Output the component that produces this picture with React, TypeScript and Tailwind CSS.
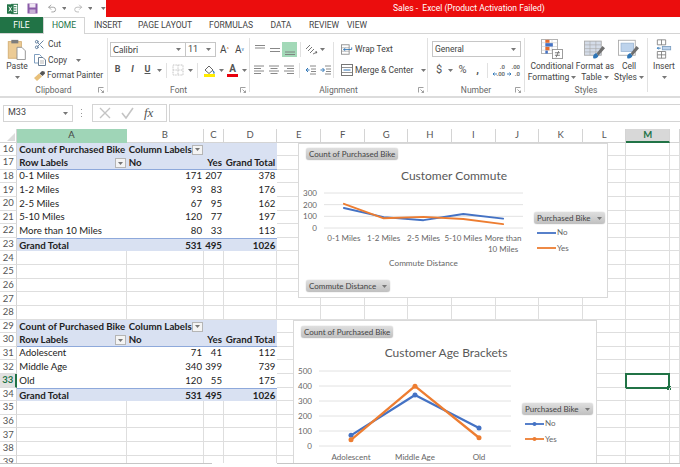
import React from 'react';
import { Scissors, Undo2, Redo2 } from 'lucide-react';

const ui = "font-['Roboto','Open_Sans',sans-serif]";
const calibri = "font-['Lato','Open_Sans',sans-serif]";

const Caret = ({ className = '' }: { className?: string }) => (
  <svg width="5" height="3" viewBox="0 0 5 3" className={className}>
    <polygon points="0,0 5,0 2.5,3" fill="#777" />
  </svg>
);

const Launcher = () => (
  <svg width="6" height="6" viewBox="0 0 6 6" className="absolute right-[3px] bottom-[3px]">
    <path d="M0.5 5.5V0.5H5.5M2.5 2.5L5.5 5.5M3.5 5.5H5.5V3.5" fill="none" stroke="#888" strokeWidth="0.8" />
  </svg>
);

const Lines = ({ kind }: { kind: 'top' | 'mid' | 'bot' | 'left' | 'center' | 'right' }) => {
  const rows: Record<string, [number, number, number][]> = {
    top: [[1, 11, 1.5], [1, 11, 4]],
    mid: [[1, 11, 4.5], [1, 11, 7.5]],
    bot: [[1, 11, 8], [1, 11, 10.5]],
    left: [[1, 11, 2], [1, 8, 4.5], [1, 11, 7], [1, 8, 9.5]],
    center: [[1, 11, 2], [2.5, 9.5, 4.5], [1, 11, 7], [2.5, 9.5, 9.5]],
    right: [[1, 11, 2], [4, 11, 4.5], [1, 11, 7], [4, 11, 9.5]],
  };
  return (
    <svg width="12" height="12" viewBox="0 0 12 12">
      {rows[kind].map(([a, b, y]) => (
        <line key={y} x1={a} x2={b} y1={y} y2={y} stroke="#7a7a7a" strokeWidth="0.9" />
      ))}
    </svg>
  );
};

const Indent = ({ flip }: { flip?: boolean }) => (
  <svg width="12" height="12" viewBox="0 0 12 12">
    <path d="M5 2H11M6 5H11M6 7.5H11M5 10H11" stroke="#7a7a7a" strokeWidth="0.9" />
    <path d={flip ? 'M0.5 6H4M2.5 4L4.5 6L2.5 8' : 'M4.5 6H1M3 4L1 6L3 8'} fill="none" stroke="#2e75b6" strokeWidth="1" />
  </svg>
);

const Excel = () => (
  <svg width="12" height="12" viewBox="0 0 12 12">
    <rect x="5" y="1" width="6.5" height="10" fill="#fff" stroke="#217346" />
    <path d="M7 3.5H10M7 6H10M7 8.5H10" stroke="#217346" />
    <rect x="0" y="1" width="7" height="10" fill="#217346" />
    <path d="M2 3.5L5 8.5M5 3.5L2 8.5" stroke="#fff" strokeWidth="1" />
  </svg>
);

const Floppy = () => (
  <svg width="11" height="11" viewBox="0 0 11 11">
    <rect x="0.5" y="0.5" width="10" height="10" fill="#8a5ba8" />
    <rect x="2.5" y="0.5" width="6" height="4" fill="#efe6f3" />
    <rect x="2.5" y="6.5" width="6" height="4" fill="#c7b0d5" />
  </svg>
);

const PasteIcon = () => (
  <svg width="20" height="21" viewBox="0 0 21 24">
    <rect x="0.5" y="3" width="15" height="19" fill="#eccb95" stroke="#d3ad72" />
    <rect x="4" y="1" width="8" height="4" fill="#7d7d7d" />
    <path d="M10.5 9.5H16L20 13.5V23.5H10.5Z" fill="#fff" stroke="#8a8a8a" />
  </svg>
);

const CopyIcon = () => (
  <svg width="12" height="12" viewBox="0 0 12 12">
    <path d="M0.5 0.5H5.5L7.5 2.5V9H0.5Z" fill="#fff" stroke="#7f9fc0" />
    <path d="M4.5 3.5H9L11.5 6V11.5H4.5Z" fill="#fff" stroke="#6b7f95" />
    <path d="M6 7H10M6 9H10" stroke="#9a9a9a" strokeWidth="0.7" />
  </svg>
);

const BrushIcon = () => (
  <svg width="13" height="12" viewBox="0 0 13 12">
    <path d="M1 8L6 3.5L9 6.5L4 11Z" fill="#e8c07a" />
    <path d="M6.5 3.5L9 1L11.5 1.5L12 3.5L9.5 6Z" fill="#555" />
  </svg>
);

const BorderIcon = () => (
  <svg width="12" height="12" viewBox="0 0 12 12">
    <path d="M1 1H11V11H1ZM6 1V11M1 6H11" fill="none" stroke="#c4c4c4" strokeDasharray="1 0.6" />
  </svg>
);

const FillIcon = () => (
  <div className="flex flex-col items-center">
    <svg width="12" height="10" viewBox="0 0 12 10">
      <path d="M2 6L6 2L10 6L6 9.5Z" fill="#fff" stroke="#666" />
      <path d="M10 7C11 8 11.5 9 10.5 9.5" fill="none" stroke="#2e75b6" strokeWidth="1.2" />
    </svg>
    <div className="h-[3px] w-[11px] bg-[#ffeb00]" />
  </div>
);

const OrientIcon = () => (
  <svg width="13" height="12" viewBox="0 0 13 12">
    <path d="M1 5L5 1M3 7L7 3M5 9L9 5" stroke="#777" strokeWidth="1" />
    <path d="M8 10L12 8M10.5 7.5L12 8L11 9.5" fill="none" stroke="#555" strokeWidth="0.8" />
  </svg>
);

const WrapIcon = () => (
  <svg width="12" height="11" viewBox="0 0 14 12">
    <rect x="0.5" y="0.5" width="9" height="11" fill="#fff" stroke="#888" />
    <path d="M0.5 4H9.5M0.5 8H9.5" stroke="#888" strokeWidth="0.7" />
    <path d="M3 6H12.5V3.5M5 4.5L3 6L5 7.5" fill="none" stroke="#2e75b6" />
  </svg>
);

const MergeIcon = () => (
  <svg width="12" height="12" viewBox="0 0 12 12">
    <rect x="0.5" y="0.5" width="11" height="11" fill="#fff" stroke="#777" />
    <path d="M0.5 3.5H11.5M0.5 8.5H11.5" stroke="#777" strokeWidth="0.8" />
    <path d="M2.5 6H9.5" stroke="#2e75b6" />
  </svg>
);

const Decimal = ({ inc }: { inc?: boolean }) => (
  <div className="relative flex h-[14px] w-[13px] flex-col items-end text-[6px] leading-[7px] font-semibold text-[#666]">
    <span>{inc ? '.0' : '.00'}</span>
    <span>{inc ? '.00' : '.0'}</span>
    <svg width="5" height="4" viewBox="0 0 5 4" className="absolute bottom-[1px] left-0">
      <path d={inc ? 'M5 2H1M2.5 0.5L1 2L2.5 3.5' : 'M0 2H4M2.5 0.5L4 2L2.5 3.5'} fill="none" stroke="#2e75b6" strokeWidth="0.9" />
    </svg>
  </div>
);

const CondIcon = () => (
  <svg width="22" height="20" viewBox="0 0 26 24">
    <rect x="0.5" y="0.5" width="19" height="17" fill="#fff" stroke="#a6a6a6" />
    <path d="M0.5 4.5H19.5M0.5 9H19.5M0.5 13.5H19.5M6.5 0.5V17.5M13 0.5V17.5" stroke="#c9c9c9" strokeWidth="0.7" />
    <rect x="5" y="1" width="5" height="3.5" fill="#e46c2e" />
    <rect x="5" y="5" width="9" height="4" fill="#4472c4" />
    <rect x="5" y="9.5" width="5" height="4" fill="#e46c2e" />
    <rect x="5" y="14" width="3" height="3.5" fill="#4472c4" />
    <rect x="13.5" y="12.5" width="12" height="11" fill="#fff" stroke="#8a8a8a" />
    <path d="M16.5 16.5H22.5M16.5 19.5H22.5M18 22L21 14.5" stroke="#555" strokeWidth="0.9" />
  </svg>
);

const TableIcon = () => (
  <svg width="22" height="20" viewBox="0 0 26 24">
    <rect x="0.5" y="2.5" width="20" height="17" fill="#d4dce8" stroke="#a6a6a6" />
    <path d="M0.5 7H20.5M0.5 11.5H20.5M0.5 15.5H20.5M7 2.5V19.5M14 2.5V19.5" stroke="#a6a6a6" strokeWidth="0.7" />
    <path d="M11 23C10 20 12 17 15 17L17 20C17 22 14 24 11 23Z" fill="#2e75b6" />
    <path d="M15 17L22 8.5L25 11L17 20Z" fill="#6f6f6f" />
  </svg>
);

const StyleIcon = () => (
  <svg width="22" height="20" viewBox="0 0 26 24">
    <rect x="0.5" y="1.5" width="20" height="18" fill="#fff" stroke="#a6a6a6" />
    <rect x="3.5" y="5" width="15" height="10" fill="#bdd3ec" stroke="#9db6d3" />
    <path d="M11 23C10 20 12 17 15 17L17 20C17 22 14 24 11 23Z" fill="#2e75b6" />
    <path d="M15 17L22 8.5L25 11L17 20Z" fill="#6f6f6f" />
  </svg>
);

const InsertIcon = () => (
  <svg width="16" height="20" viewBox="0 0 18 24">
    <path d="M1 1H11V7H1ZM6 1V7M1 15H11V23H1ZM6 15V23M1 19H11" fill="none" stroke="#7a7a7a" />
    <rect x="7" y="9" width="10" height="4" fill="#bdd3ec" stroke="#7a9cc0" />
    <path d="M5 11H1M2.5 9.5L1 11L2.5 12.5" fill="none" stroke="#2e75b6" strokeWidth="1.2" />
  </svg>
);

const Divider = () => <div className="my-[4px] w-px bg-[#e1e1e1]" />;
const MiniSep = () => <div className="mx-[3px] h-[15px] w-px bg-[#e1e1e1]" />;
const Cell = ({ w, children }: { w: string; children: React.ReactNode }) => (
  <div className={`flex h-[15px] items-center justify-center ${w}`}>{children}</div>
);

const Group = ({ className, label, launcher, children }: { className: string; label: string; launcher?: boolean; children: React.ReactNode }) => (
  <div className={`relative flex h-full shrink-0 flex-col ${className}`}>
    <div className="h-[51px]">{children}</div>
    <div className="text-center text-[8.5px] leading-[12px] text-[#666]">{label}</div>
    {launcher && <Launcher />}
  </div>
);

const BigButton = ({ w, icon, lines }: { w: string; icon: React.ReactNode; lines: [string, string] }) => (
  <div className={`flex flex-col items-center pt-[5px] text-[8.5px] leading-[11px] text-[#444] ${w}`}>
    <div className="flex h-[20px] items-center">{icon}</div>
    <span className="mt-[2px] whitespace-nowrap">{lines[0]}</span>
    <span className="flex items-center gap-[2px] whitespace-nowrap">
      {lines[1]}
      <Caret />
    </span>
  </div>
);

const Ribbon = () => (
  <div className={`flex h-[64px] border-b-2 border-[#dcdcdc] bg-white ${ui}`}>
    <Group className="w-[107px]" label="Clipboard" launcher>
      <div className="flex text-[8.5px] text-[#444]">
        <div className="flex w-[34px] flex-col items-center pt-[5px] leading-[11px]">
          <PasteIcon />
          <span className="mt-[1px]">Paste</span>
          <Caret className="mt-[4px]" />
        </div>
        <div className="flex flex-col pt-[3px] leading-[15.5px]">
          <div className="flex items-center gap-[3px]">
            <Scissors size={11} color="#5b7a99" />
            Cut
          </div>
          <div className="flex items-center gap-[2px]">
            <CopyIcon />
            Copy
            <Caret className="ml-[7px]" />
          </div>
          <div className="-ml-[1px] flex items-center gap-[1px] whitespace-nowrap">
            <BrushIcon />
            Format Painter
          </div>
        </div>
      </div>
    </Group>
    <Divider />
    <Group className="w-[141px]" label="Font" launcher>
      <div className="pt-[8px] pl-[2px]">
        <div className="flex h-[15px] items-center text-[#444]">
          <div className={`flex h-full w-[76px] items-center justify-between border border-[#c6c6c6] pr-[4px] pl-[2px] text-[9px] ${calibri}`}>
            Calibri
            <Caret />
          </div>
          <div className="-ml-px flex h-full w-[31px] items-center justify-between border border-[#c6c6c6] pr-[4px] pl-[2px] text-[9px]">
            11
            <Caret />
          </div>
          <div className="ml-[1px] flex w-[30px] justify-around text-[10px]">
            <span>A<sup className="text-[5px] text-[#c55a11]">^</sup></span>
            <span>A<sup className="text-[5px] text-[#2e75b6]">v</sup></span>
          </div>
        </div>
        <div className="mt-[5px] flex h-[16px] items-center text-[9px] font-bold text-[#555]">
          <Cell w="w-[15px]">B</Cell>
          <Cell w="w-[15px]"><span className="italic">I</span></Cell>
          <Cell w="w-[15px]"><span className="underline">U</span></Cell>
          <Cell w="w-[8px]"><Caret /></Cell>
          <MiniSep />
          <Cell w="w-[16px]"><BorderIcon /></Cell>
          <Cell w="w-[8px]"><Caret /></Cell>
          <MiniSep />
          <Cell w="w-[16px]"><FillIcon /></Cell>
          <Cell w="w-[8px]"><Caret /></Cell>
          <Cell w="w-[15px]">
            <div className="flex flex-col items-center text-[10px] leading-[11px]">
              A
              <div className="h-[3px] w-[11px] bg-[#e8000d]" />
            </div>
          </Cell>
          <Cell w="w-[8px]"><Caret /></Cell>
        </div>
      </div>
    </Group>
    <Divider />
    <Group className="w-[177px]" label="Alignment" launcher>
      <div className="flex pt-[8px] pl-[2px]">
        <div className="flex w-[81px] shrink-0 flex-col">
          <div className="flex h-[15px] items-center">
            <Cell w="w-[15px]"><Lines kind="top" /></Cell>
            <Cell w="w-[15px]"><Lines kind="mid" /></Cell>
            <Cell w="w-[15px] bg-[#a3d9b8]"><Lines kind="bot" /></Cell>
            <MiniSep />
            <Cell w="w-[14px]"><OrientIcon /></Cell>
            <Cell w="w-[8px]"><Caret /></Cell>
          </div>
          <div className="mt-[5px] flex h-[16px] items-center">
            <Cell w="w-[15px]"><Lines kind="left" /></Cell>
            <Cell w="w-[15px]"><Lines kind="center" /></Cell>
            <Cell w="w-[15px]"><Lines kind="right" /></Cell>
            <MiniSep />
            <Cell w="w-[15px]"><Indent /></Cell>
            <Cell w="w-[15px]"><Indent flip /></Cell>
          </div>
        </div>
        <div className="flex flex-col border-l border-[#e1e1e1] pl-[7px] text-[8.5px] text-[#444]">
          <div className="flex h-[15px] items-center gap-[2px] whitespace-nowrap"><WrapIcon />Wrap Text</div>
          <div className="mt-[5px] flex h-[16px] items-center gap-[2px] whitespace-nowrap">
            <MergeIcon />Merge &amp; Center
            <Caret className="ml-[6px]" />
          </div>
        </div>
      </div>
    </Group>
    <Divider />
    <Group className="w-[96px]" label="Number" launcher>
      <div className="pt-[7px] pl-[4px]">
        <div className="flex h-[16px] w-[89px] items-center justify-between border border-[#c6c6c6] pr-[4px] pl-[2px] text-[8.5px] text-[#444]">
          General
          <Caret />
        </div>
        <div className="mt-[5px] flex h-[16px] items-center text-[11px] text-[#555]">
          <Cell w="w-[14px]">$</Cell>
          <Cell w="w-[8px]"><Caret /></Cell>
          <Cell w="w-[17px]">%</Cell>
          <Cell w="w-[13px]"><span className="font-bold">,</span></Cell>
          <div className="mx-[3px] h-[15px] w-px bg-[#e1e1e1]" />
          <Cell w="w-[15px]"><Decimal inc /></Cell>
          <Cell w="w-[15px]"><Decimal /></Cell>
        </div>
      </div>
    </Group>
    <Divider />
    <Group className="w-[122px]" label="Styles">
      <div className="flex">
        <BigButton w="w-[54px]" icon={<CondIcon />} lines={['Conditional', 'Formatting']} />
        <BigButton w="w-[32px]" icon={<TableIcon />} lines={['Format as', 'Table']} />
        <BigButton w="w-[36px]" icon={<StyleIcon />} lines={['Cell', 'Styles']} />
      </div>
    </Group>
    <Divider />
    <div className="flex w-[32px] flex-col items-center pt-[5px] text-[8.5px] leading-[11px] text-[#444]">
      <InsertIcon />
      <span className="mt-[2px]">Insert</span>
      <Caret className="mt-[4px]" />
    </div>
  </div>
);

const FormulaBar = () => (
  <div className={`mt-[6px] flex h-[18px] items-center bg-white ${ui}`}>
    <div className="ml-[3px] flex h-[17px] w-[70px] items-center justify-between border border-[#d4d4d4] pr-[4px] pl-[4px] text-[9px] text-[#444]">
      M33
      <Caret />
    </div>
    <div className="ml-[8px] flex h-[8px] w-[2px] flex-col justify-between">
      <div className="h-px w-px bg-[#999]" />
      <div className="h-px w-px bg-[#999]" />
      <div className="h-px w-px bg-[#999]" />
    </div>
    <div className="ml-[9px] flex h-[18px] w-[75px] items-center gap-[10px] border border-[#d4d4d4] pl-[6px]">
      <svg width="12" height="12" viewBox="0 0 12 12"><path d="M1 1L11 11M11 1L1 11" stroke="#c4c4c4" strokeWidth="1.4" /></svg>
      <svg width="13" height="12" viewBox="0 0 13 12"><path d="M1 6L5 11L12 1" fill="none" stroke="#c4c4c4" strokeWidth="1.6" /></svg>
      <span className="font-['Liberation_Serif',serif] text-[13px] text-[#555] italic">fx</span>
    </div>
    <div className="ml-[2px] h-[18px] flex-1 border border-r-0 border-[#d4d4d4]" />
  </div>
);

type Pivot = { a?: string; b?: string; c?: string; d?: string; kind: 'head' | 'labels' | 'body' | 'total' };

const rowsData = (items: [string, string, string, string][]): Pivot[] => [
  { a: 'Count of Purchased Bike', b: 'Column Labels', kind: 'head' },
  { a: 'Row Labels', b: 'No', c: 'Yes', d: 'Grand Total', kind: 'labels' },
  ...items.map(([a, b, c, d]) => ({ a, b, c, d, kind: 'body' as const })),
  { a: 'Grand Total', b: '531', c: '495', d: '1026', kind: 'total' },
];

const pivotOne = rowsData([
  ['0-1 Miles', '171', '207', '378'],
  ['1-2 Miles', '93', '83', '176'],
  ['2-5 Miles', '67', '95', '162'],
  ['5-10 Miles', '120', '77', '197'],
  ['More than 10 Miles', '80', '33', '113'],
]);

const pivotTwo = rowsData([
  ['Adolescent', '71', '41', '112'],
  ['Middle Age', '340', '399', '739'],
  ['Old', '120', '55', '175'],
]);

const pivotAt = (row: number): Pivot | undefined => {
  if (row >= 16 && row <= 23) return pivotOne[row - 16];
  if (row >= 29 && row <= 34) return pivotTwo[row - 29];
  return undefined;
};

const FilterButton = () => (
  <div className="absolute top-[2px] right-[1px] flex h-[10px] w-[11px] items-center justify-center border border-[#b5b5b5] bg-[#f4f4f4]">
    <Caret />
  </div>
);

const PivotCells = ({ p }: { p: Pivot }) => {
  const bold = p.kind !== 'body';
  const fill = p.kind === 'body' ? 'bg-white' : 'bg-[#d9e1f2]';
  const line = p.kind === 'labels' ? 'border-b border-[#8ea9db]' : p.kind === 'total' ? 'border-t border-[#8ea9db]' : '';
  const base = `relative flex h-full items-center px-[2px] whitespace-nowrap text-[#222] ${bold ? 'text-[9.7px] font-bold' : 'text-[9.6px]'} ${fill} ${line}`;
  const isHead = p.kind === 'head' || p.kind === 'labels';
  return (
    <>
      <div className={base}>
        {p.a}
        {p.kind === 'labels' && <FilterButton />}
      </div>
      <div className={`${base} ${isHead ? '' : 'justify-end'}`}>
        {p.b}
        {p.kind === 'head' && <FilterButton />}
      </div>
      <div className={`${base} justify-end`}>{p.c}</div>
      <div className={`${base} justify-end`}>{p.d}</div>
    </>
  );
};

const colNames = ['E', 'F', 'G', 'H', 'I', 'J', 'K', 'L', 'M', 'N'];
const sheetRows = Array.from({ length: 24 }, (_, i) => i + 16);

const Sheet = () => (
  <div className={`grid grid-cols-[17.3px_109.4px_77.3px_20px_53.3px_44px_repeat(8,43.6px)_1fr] auto-rows-[13.62px] ${calibri}`}>
    <div className="h-[14px] border-r border-b border-[#d4d4d4] bg-white">
      <svg width="10" height="10" viewBox="0 0 10 10" className="mt-[3px] ml-[6px]"><polygon points="9,1 9,9 1,9" fill="#dcdcdc" /></svg>
    </div>
    {['A', 'B', 'C', 'D', ...colNames].map((c) => (
      <div
        key={c}
        className={`flex h-[14px] items-center justify-center border-r border-b text-[9.5px] ${
          c === 'A'
            ? 'border-[#9fd5b7] bg-[#9fd5b7] text-[#444]'
            : c === 'M'
              ? 'border-r-[#d4d4d4] border-b-2 border-b-[#217346] bg-[#d8d8d8] font-bold text-[#217346]'
              : 'border-[#d4d4d4] bg-white text-[#555]'
        }`}
      >
        {c === 'N' ? '' : c}
      </div>
    ))}
    {sheetRows.flatMap((row) => {
      const p = pivotAt(row);
      const active = row === 33;
      const cells: React.ReactNode[] = [
        <div
          key={`h${row}`}
          className={`flex items-center justify-center border-b border-[#dedede] text-[9.5px] ${
            active ? 'border-r-2 border-r-[#217346] bg-[#e1e1e1] font-bold text-[#217346]' : 'border-r border-r-[#d4d4d4] bg-white text-[#555]'
          }`}
        >
          {row}
        </div>,
      ];
      if (p) {
        cells.push(<PivotCells key={`p${row}`} p={p} />);
      } else {
        ['A', 'B', 'C', 'D'].forEach((c) => {
          cells.push(<div key={`${c}${row}`} className="border-r border-b border-[#dedede]" />);
        });
      }
      colNames.forEach((c) => {
        const selected = active && c === 'M';
        cells.push(
          <div key={`${c}${row}`} className="relative border-r border-b border-[#dedede]">
            {selected && (
              <div className="absolute -inset-x-px -top-px -bottom-[2px] border-2 border-[#217346]">
                <div className="absolute -right-[3px] -bottom-[3px] h-[4px] w-[4px] bg-[#217346]" />
              </div>
            )}
          </div>,
        );
      });
      return cells;
    })}
  </div>
);

type Series = { name: string; color: string; values: number[] };

const Plot = ({ w, h, x0, x1, yTop, yZero, max, step, cats, labelY, series, markers, thick, axisTitle }: {
  w: number; h: number; x0: number; x1: number; yTop: number; yZero: number; max: number; step: number;
  cats: string[][]; labelY: number; series: Series[]; markers?: boolean; thick: number; axisTitle?: string;
}) => {
  const ticks = Array.from({ length: max / step + 1 }, (_, i) => i * step);
  const yOf = (v: number) => yZero - (v / max) * (yZero - yTop);
  const xOf = (i: number) => x0 + ((x1 - x0) * (i + 0.5)) / cats.length;
  return (
    <svg width={w} height={h} viewBox={`0 0 ${w} ${h}`} className="shrink-0" fontSize="8" fill="#666">
      {ticks.map((t) => (
        <g key={t}>
          <line x1={x0} x2={x1} y1={yOf(t)} y2={yOf(t)} stroke="#e2e2e2" strokeWidth="1" />
          <text x={x0 - 7} y={yOf(t) + 3} textAnchor="end">{t}</text>
        </g>
      ))}
      {series.map((s) => (
        <g key={s.name}>
          <polyline
            points={s.values.map((v, i) => `${xOf(i)},${yOf(v)}`).join(' ')}
            fill="none"
            stroke={s.color}
            strokeWidth={thick}
            strokeLinecap="round"
            strokeLinejoin="round"
          />
          {markers && s.values.map((v, i) => <circle key={i} cx={xOf(i)} cy={yOf(v)} r="2.5" fill={s.color} />)}
        </g>
      ))}
      {cats.map((lines, i) => (
        <text key={lines[0]} x={xOf(i)} y={labelY} textAnchor="middle">
          {lines.map((l, j) => (
            <tspan key={l} x={xOf(i)} dy={j === 0 ? 0 : 10.5}>{l}</tspan>
          ))}
        </text>
      ))}
      {axisTitle && <text x={x0 + (x1 - x0) / 2} y={labelY + 25} textAnchor="middle" fontSize="8.2">{axisTitle}</text>}
    </svg>
  );
};

const FieldButton = ({ label, arrow, className = '' }: { label: string; arrow?: boolean; className?: string }) => (
  <div className={`flex h-[12px] w-fit items-center gap-[6px] rounded-[3px] bg-linear-to-b from-[#dfdfdf] to-[#c0c0c0] px-[3px] text-[8px] whitespace-nowrap text-[#444] shadow-[0_0_1px_#999] ${className}`}>
    {label}
    {arrow && <Caret />}
  </div>
);

const Legend = ({ series, markers, className }: { series: Series[]; markers?: boolean; className: string }) => (
  <div className={`flex flex-col ${className}`}>
    <FieldButton label="Purchased Bike" arrow />
    <div className="mt-[1px] flex flex-col pl-[3px] text-[8px] leading-[15.5px] text-[#666]">
      {series.map((s) => (
        <div key={s.name} className="flex items-center gap-[1px]">
          <svg width="19" height="6" viewBox="0 0 19 6">
            <line x1="0" x2="19" y1="3" y2="3" stroke={s.color} strokeWidth="1.8" />
            {markers && <circle cx="9.5" cy="3" r="2" fill={s.color} />}
          </svg>
          {s.name}
        </div>
      ))}
    </div>
  </div>
);

const blue = '#4472c4';
const orange = '#ed7d31';

const commuteSeries: Series[] = [
  { name: 'No', color: blue, values: [171, 93, 67, 120, 80] },
  { name: 'Yes', color: orange, values: [207, 83, 95, 77, 33] },
];

const ageSeries: Series[] = [
  { name: 'No', color: blue, values: [71, 340, 120] },
  { name: 'Yes', color: orange, values: [41, 399, 55] },
];

const CommuteChart = () => (
  <div className={`absolute top-[14px] left-[298px] flex h-[155px] w-[310px] flex-col border border-[#d9d9d9] bg-white pt-[4px] pl-[7px] ${calibri}`}>
    <FieldButton label="Count of Purchased Bike" />
    <div className="-ml-[7px] flex h-[28px] w-[310px] items-center justify-center pt-[4px] text-[12px] text-[#595959]">
      Customer Commute
    </div>
    <div className="-ml-[7px] flex h-[92px] items-start">
      <Plot
        w={233} h={92} x0={25} x1={224} yTop={5} yZero={40} max={300} step={100}
        cats={[['0-1 Miles'], ['1-2 Miles'], ['2-5 Miles'], ['5-10 Miles'], ['More than', '10 Miles']]}
        labelY={53} series={commuteSeries} thick={1.9} axisTitle="Commute Distance"
      />
      <Legend series={commuteSeries} className="mt-[24px] ml-[2px]" />
    </div>
    <FieldButton label="Commute Distance" arrow />
  </div>
);

const AgeChart = () => (
  <div className={`absolute top-[191px] left-[293px] flex h-[160px] w-[304px] flex-col border border-[#d9d9d9] bg-white pt-[5px] pl-[7px] ${calibri}`}>
    <FieldButton label="Count of Purchased Bike" />
    <div className="-ml-[7px] flex h-[27px] w-[304px] items-center justify-center pt-[3px] text-[12px] text-[#595959]">
      Customer Age Brackets
    </div>
    <div className="-ml-[7px] flex items-start">
      <Plot
        w={226} h={104} x0={25} x1={217} yTop={6} yZero={81} max={500} step={100}
        cats={[['Adolescent'], ['Middle Age'], ['Old']]}
        labelY={95} series={ageSeries} markers thick={2.3}
      />
      <Legend series={ageSeries} markers className="mt-[38px] ml-[2px]" />
    </div>
  </div>
);

const tabs = [
  ['INSERT', 'w-[46px]'],
  ['PAGE LAYOUT', 'w-[68px]'],
  ['FORMULAS', 'w-[64px]'],
  ['DATA', 'w-[36px]'],
  ['REVIEW', 'w-[50px]'],
  ['VIEW', 'w-[16px]'],
];

export default function App() {
  return (
    <div className="relative h-[467px] w-[680px] overflow-hidden bg-white">
      <div className={`flex h-[17px] ${ui}`}>
        <div className="flex w-[106px] shrink-0 items-center gap-[4px] pl-[7px]">
          <Excel />
          <div className="ml-[5px]"><Floppy /></div>
          <Undo2 size={11} color="#9a9a9a" className="ml-[5px]" />
          <Caret />
          <Redo2 size={11} color="#b5b5b5" className="ml-[3px]" />
          <Caret />
          <Caret className="ml-[5px]" />
        </div>
        <div className="flex flex-1 items-center bg-[#eb0d0d] pl-[287px] text-[8.5px] whitespace-pre text-white">
          Sales -  Excel (Product Activation Failed)
        </div>
      </div>
      <div className={`flex h-[17px] items-center border-b border-[#d4d4d4] text-[8.5px] text-[#444] ${ui}`}>
        <div className="flex h-full w-[43px] items-center justify-center bg-[#217346] text-white">FILE</div>
        <div className="flex h-[17px] w-[42px] items-center justify-center border-x border-t border-[#d4d4d4] bg-white text-[#217346]">HOME</div>
        {tabs.map(([t, w]) => (
          <div key={t} className={`flex justify-center whitespace-nowrap ${w}`}>{t}</div>
        ))}
      </div>
      <Ribbon />
      <FormulaBar />
      <div className="relative mt-[7px]">
        <Sheet />
        <CommuteChart />
        <AgeChart />
      </div>
      <div className="absolute right-0 bottom-0 left-0 flex h-[4px] bg-white">
        <div className="h-full w-[212px] border-t border-[#c6c6c6]" />
        <div className="h-full w-[65px]" />
        <div className="h-full flex-1 border-t border-[#c6c6c6]" />
      </div>
    </div>
  );
}
